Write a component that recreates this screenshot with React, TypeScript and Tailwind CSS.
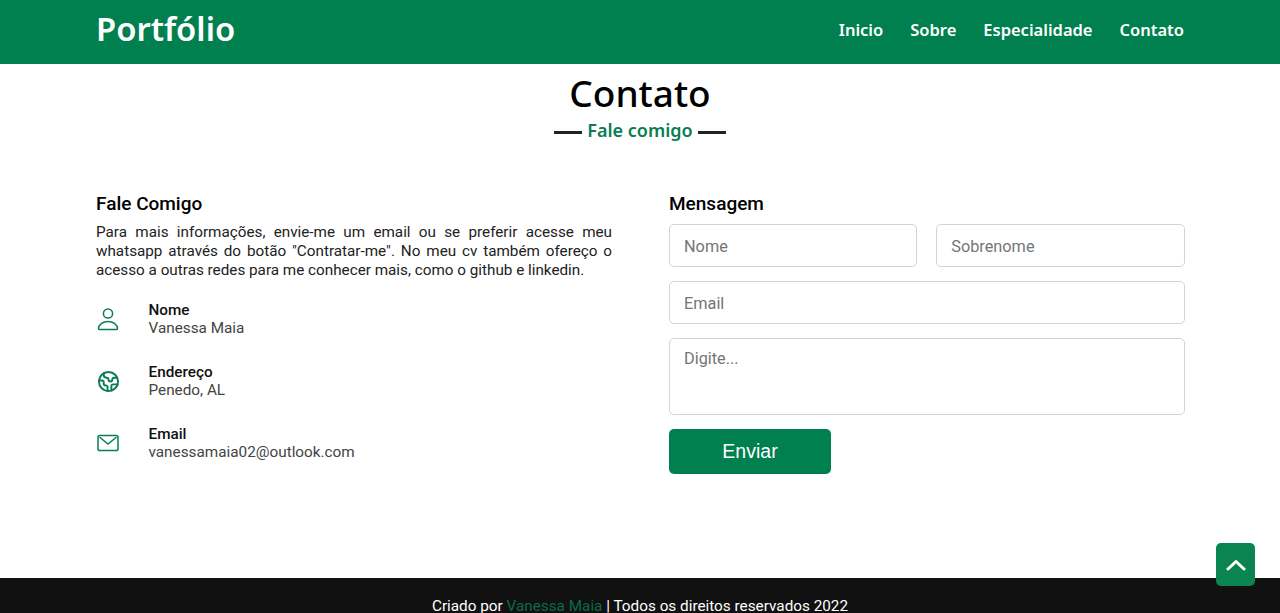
import React from "react";
import { Earth } from "lucide-react";

const navLinks = ["Inicio", "Sobre", "Especialidade", "Contato"];

const PersonIcon = () => (
  <svg width="23" height="24" viewBox="0 0 23 24" fill="none" stroke="currentColor" strokeWidth="1.5">
    <circle cx="12" cy="6.5" r="4.6" />
    <path d="M2.5 21.6c0-4.2 4.2-7 9.5-7s9.5 2.8 9.5 7c0 .7-.4 1-1 1h-17c-.6 0-1-.3-1-1z" />
  </svg>
);

const MailIcon = () => (
  <svg width="23" height="24" viewBox="0 0 23 24" fill="none" stroke="currentColor" strokeWidth="1.5">
    <rect x="2" y="4.5" width="20" height="15" rx="1.8" />
    <path d="M4 6.5l8 6.5 8-6.5" strokeLinecap="round" />
  </svg>
);

const contacts = [
  { icon: <PersonIcon />, label: "Nome", value: "Vanessa Maia" },
  { icon: <Earth size={23} strokeWidth={2} className="ml-[1px]" />, label: "Endereço", value: "Penedo, AL" },
  { icon: <MailIcon />, label: "Email", value: "vanessamaia02@outlook.com" },
];

const inputClass =
  "h-[43px] w-full rounded-[5px] border border-[#ced4da] bg-white px-[14px] pt-[2px] text-[16.3px] text-[#333] outline-none placeholder:text-[#757575]";

const App: React.FC = () => {
  return (
    <div className="relative flex h-[613px] flex-col overflow-hidden bg-white font-['Roboto',sans-serif]">
      <header className="flex h-16 shrink-0 items-center justify-between bg-[#00804f] px-24 font-['Noto_Sans',sans-serif] text-white">
        <span className="-translate-y-[3px] text-[32.8px] font-semibold leading-none">Portfólio</span>
        <nav className="flex -translate-y-[2px] gap-[27px]">
          {navLinks.map((link) => (
            <a key={link} className="text-[16.5px] font-semibold">
              {link}
            </a>
          ))}
        </nav>
      </header>

      <main className="flex-1">
        <div className="pt-[7px] text-center font-['Noto_Sans',sans-serif]">
          <h1 className="text-[37px] font-medium leading-[44px] text-black">Contato</h1>
          <div className="mt-[2px] flex items-center justify-center gap-[5px]">
            <span className="mt-[4px] h-[3px] w-7 bg-[#222]" />
            <span className="text-lg font-semibold leading-[26px] text-[#0a7d52]">Fale comigo</span>
            <span className="mt-[4px] h-[3px] w-7 bg-[#222]" />
          </div>
        </div>

        <div className="mt-[49px] flex justify-between pl-24 pr-[95.5px]">
          <section className="w-[516px]">
            <h2 className="text-[19px] font-medium leading-6 text-black">Fale Comigo</h2>
            <p className="mt-[7px] text-justify text-[15.25px] leading-[18.75px] text-[#222]">
              Para mais informações, envie-me um email ou se preferir acesse meu whatsapp através do
              botão "Contratar-me". No meu cv também ofereço o acesso a outras redes para me conhecer
              mais, como o github e linkedin.
            </p>
            <ul className="mt-[22px] flex flex-col gap-[26px]">
              {contacts.map((item) => (
                <li key={item.label} className="flex items-center">
                  <span className="w-[52.5px] text-[#0a7d52]">{item.icon}</span>
                  <div className="text-[15.3px] leading-[18px]">
                    <div className="font-medium text-[#111]">{item.label}</div>
                    <div className="text-[#444]">{item.value}</div>
                  </div>
                </li>
              ))}
            </ul>
          </section>

          <section className="w-[515.5px]">
            <h2 className="text-[19px] font-medium leading-6 text-black">Mensagem</h2>
            <form className="mt-[8px] flex flex-col gap-[14px]">
              <div className="flex gap-[19px]">
                <input className={inputClass} placeholder="Nome" />
                <input className={inputClass} placeholder="Sobrenome" />
              </div>
              <input className={inputClass} placeholder="Email" />
              <textarea
                className="h-[77px] w-full resize-none rounded-[5px] border border-[#ced4da] bg-white px-[14px] py-[8px] text-[16.3px] text-[#333] outline-none placeholder:text-[#757575]"
                placeholder="Digite..."
              />
              <button
                type="button"
                className="h-[45px] w-[162px] rounded-[5px] bg-[#00804f] font-['Liberation_Sans',sans-serif] text-[19.5px] text-white"
              >
                Enviar
              </button>
            </form>
          </section>
        </div>
      </main>

      <footer className="flex h-[35px] shrink-0 items-end justify-center bg-[#111] text-[15.3px] leading-[19px] text-white">
        <p className="translate-y-[3px] whitespace-nowrap">
          Criado por <span className="text-[#0a6b45]">Vanessa Maia</span> | Todos os direitos reservados 2022
        </p>
      </footer>

      <a className="absolute left-[1216px] top-[543px] flex h-[43px] w-[39px] items-center justify-center rounded-[5px] bg-[#0a8450] text-white">
        <svg width="20" height="12" viewBox="0 0 20 12" fill="none" stroke="currentColor" strokeWidth="3" strokeLinecap="round" strokeLinejoin="round">
          <path d="M2 10l8-7.5 8 7.5" />
        </svg>
      </a>
    </div>
  );
};

export default App;
